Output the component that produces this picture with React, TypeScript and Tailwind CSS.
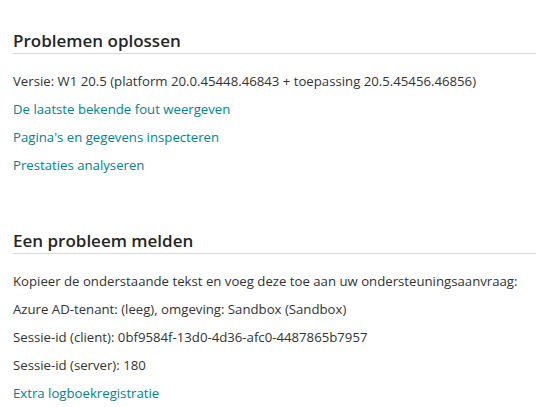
const troubleshootLinks = [
  "De laatste bekende fout weergeven",
  "Pagina's en gegevens inspecteren",
  "Prestaties analyseren",
];

const reportLines = [
  "Kopieer de onderstaande tekst en voeg deze toe aan uw ondersteuningsaanvraag:",
  "Azure AD-tenant: (leeg), omgeving: Sandbox (Sandbox)",
  "Sessie-id (client): 0bf9584f-13d0-4d36-afc0-4487865b7957",
  "Sessie-id (server): 180",
];

function SectionTitle({ children }: { children: string }) {
  return (
    <h2 className="h-[25px] border-b border-[#d9d9d9] text-[17px] font-semibold leading-[24px] text-[#262626]">
      {children}
    </h2>
  );
}

function Row({ children, link = false }: { children: string; link?: boolean }) {
  return (
    <p className="flex h-[28px] items-center">
      {link ? (
        <a href="#" className="text-[#00858a] hover:underline">
          {children}
        </a>
      ) : (
        children
      )}
    </p>
  );
}

export default function App() {
  return (
    <div className="h-[407px] w-[536px] overflow-hidden bg-white pl-[13px] font-['Open_Sans',sans-serif] text-[13.2px] text-[#333333]">
      <section className="pt-[29px]">
        <SectionTitle>Problemen oplossen</SectionTitle>
        <div className="mt-[14px]">
          <Row>Versie: W1 20.5 (platform 20.0.45448.46843 + toepassing 20.5.45456.46856)</Row>
          {troubleshootLinks.map((l) => (
            <Row key={l} link>
              {l}
            </Row>
          ))}
        </div>
      </section>

      <section className="pt-[49px]">
        <SectionTitle>Een probleem melden</SectionTitle>
        <div className="mt-[14px]">
          {reportLines.map((l) => (
            <Row key={l}>{l}</Row>
          ))}
          <Row link>Extra logboekregistratie</Row>
        </div>
      </section>
    </div>
  );
}
